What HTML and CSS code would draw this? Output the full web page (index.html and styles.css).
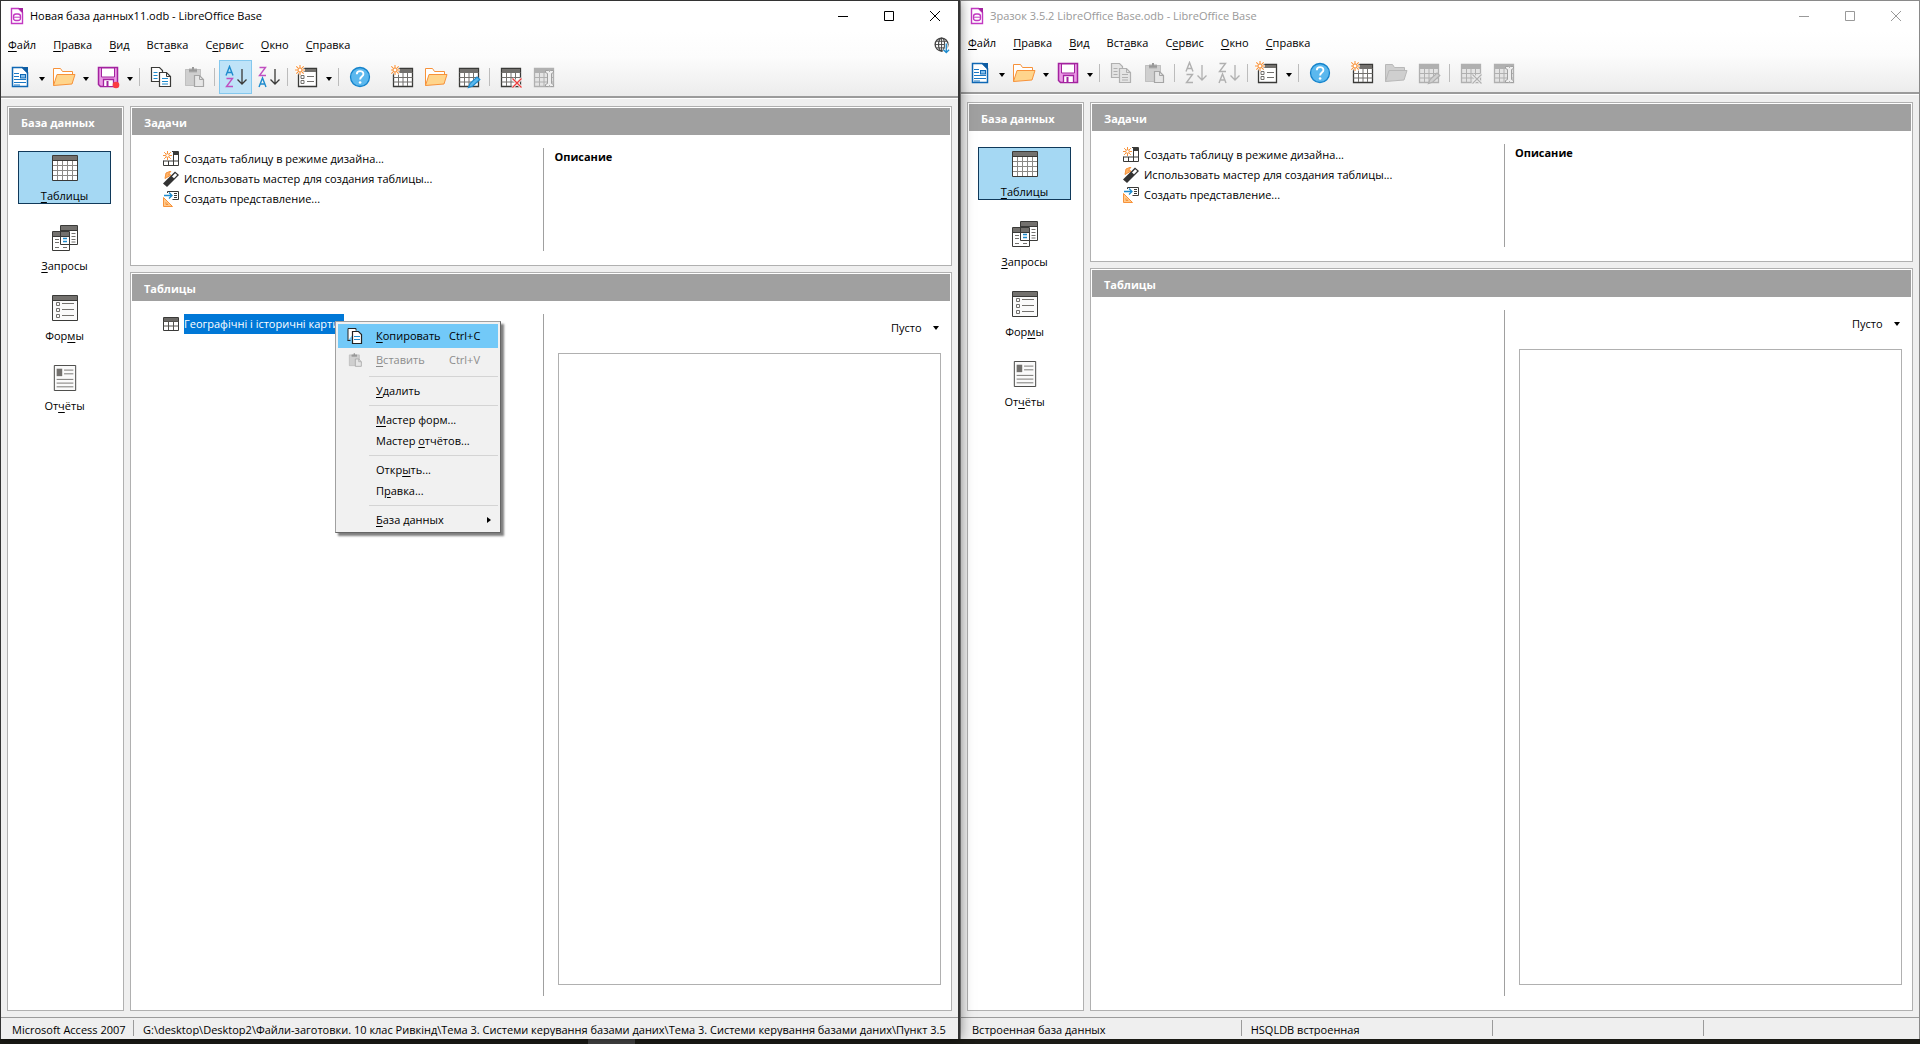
FILE: index.html
```html
<!DOCTYPE html>
<html lang="ru">
<head>
  <meta charset="UTF-8" />
  <title>LibreOffice Base</title>
  <meta name="viewport" content="width=device-width, initial-scale=1.0"/>
  <link rel="stylesheet" href="styles.css">
</head>
<body>
  <!-- Набор иконок -->
  <svg class="icon-set" xmlns="http://www.w3.org/2000/svg" aria-hidden="true">
    <symbol id="i-app" viewBox="0 0 14 18">
      <path d="M1.5 1.5h7l4 4v11h-11z" fill="#fff" stroke="#c238c2" stroke-width="1.4"/>
      <path d="M8 1h5v5z" fill="#a3229f"/>
      <rect x="3.5" y="7" width="7" height="6.500" rx="2.500" fill="none" stroke="#c238c2" stroke-width="1.300"/>
      <path d="M4 10.200h6" stroke="#c238c2"/>
    </symbol>
    <symbol id="i-new" viewBox="0 0 24 24">
      <path d="M4.500 2.500h10l5 5v14h-15z" fill="#fff" stroke="#0f68b5" stroke-width="1.500"/>
      <path d="M13 2h7v7z" fill="#0f5da3"/>
      <path d="M6 8.500h5M6 11.500h5M6 14.500h12M6 17.500h12M6 20h6" stroke="#1a78c4"/>
      <rect x="12.500" y="9.500" width="5" height="3.500" fill="#83beec" stroke="#0f68b5"/>
    </symbol>
    <symbol id="i-open" viewBox="0 0 24 24">
      <path d="M1.500 20.500v-17h7l2 3h10v3" fill="var(--folder-back)" stroke="var(--folder)"/>
      <path d="M5 9.500h18l-3 9.500-18.500 1.500z" fill="var(--folder-fill)" stroke="var(--folder)"/>
    </symbol>
    <symbol id="i-save" viewBox="0 0 24 24">
      <path d="M2.500 2.500h19v19h-17l-2-2z" fill="#eb9ae6" stroke="#a3229f" stroke-width="1.500"/>
      <path d="M5.500 3h13v9h-13z" fill="#fff" stroke="#a3229f"/>
      <path d="M7.500 21v-6.500h10v6.500" fill="#fff" stroke="#a3229f" stroke-width="1.300"/>
      <path d="M11.500 16v5" stroke="#a3229f" stroke-width="2"/>
    </symbol>
    <symbol id="i-dot" viewBox="0 0 24 24"><circle cx="20" cy="20" r="3.300" fill="#fb3a42"/></symbol>
    <symbol id="i-copy" viewBox="0 0 24 24">
      <path d="M2.500 2.500h8l3 3v11h-11z" fill="var(--paper)" stroke="var(--ink)" stroke-width="1.200"/>
      <path d="M4.500 7.500h4M4.500 10.500h4M4.500 13.500h4" stroke="var(--blue)"/>
      <path d="M10.500 7.500h7l4 4v10h-11z" fill="var(--paper)" stroke="var(--ink)" stroke-width="1.200"/>
      <path d="M17.500 7.500v4h4" fill="none" stroke="var(--ink)"/>
      <path d="M13 13.500h6M13 16.500h6M13 19h6" stroke="var(--blue)"/>
    </symbol>
    <symbol id="i-copy-sm" viewBox="0 0 16 16">
      <path d="M1 12.500v-12h8v2" fill="#fff" stroke="#222"/>
      <path d="M.5 12.500h3" stroke="#222"/>
      <path d="M5.500 3.500h6l3 3v9h-9z" fill="#fff" stroke="#222" stroke-width="1.200"/>
      <path d="M7 8.500h6M7 11.500h6" stroke="#1e8bcd" stroke-width="1.200"/>
    </symbol>
    <symbol id="i-paste" viewBox="0 0 24 24">
      <path d="M3 4h16v17h-16z" fill="#cfcfcf"/>
      <path d="M3.500 4.500h15v16h-15z" fill="none" stroke="#c0c0c0"/>
      <path d="M7 3.500h8v4h-8z" fill="#b0b0b0"/>
      <path d="M7 5.500h8M11 2v3" stroke="#999" stroke-width="2"/>
      <path d="M12.500 10.500h5l4 4v7h-9z" fill="#e6e6e6" stroke="#a5a5a5" stroke-width="1.200"/>
      <path d="M17.500 10.500v4h4" fill="none" stroke="#a5a5a5"/>
    </symbol>
    <symbol id="i-sort-asc" viewBox="0 0 24 24">
      <path d="M2 10.500l3.500-9 3.500 9M3 7.500h5" fill="none" stroke="var(--blue)" stroke-width="1.400"/>
      <path d="M2.500 13.500h6l-6 8h6.500" fill="none" stroke="var(--magenta)" stroke-width="1.400"/>
      <path d="M18 4v15M13.500 14.500l4.500 4.500 4.500-4.500" fill="none" stroke="var(--ink)" stroke-width="1.300"/>
    </symbol>
    <symbol id="i-sort-desc" viewBox="0 0 24 24">
      <path d="M2.500 2.500h6l-6 8h6.500" fill="none" stroke="var(--magenta)" stroke-width="1.400"/>
      <path d="M2 22l3.500-9 3.500 9M3 19h5" fill="none" stroke="var(--blue)" stroke-width="1.400"/>
      <path d="M18 4v15M13.500 14.500l4.500 4.500 4.500-4.500" fill="none" stroke="var(--ink)" stroke-width="1.300"/>
    </symbol>
    <symbol id="i-spark" viewBox="0 0 10 10">
      <path d="M5 0v10M0 5h10M1 1l8 8M9 1l-8 8" stroke="#fff" stroke-width="2.500"/>
      <path d="M5 0v10M0 5h10M1.300 1.300l7.400 7.400M8.700 1.300l-7.400 7.400" stroke="#f7923a" stroke-width="1.100"/>
      <circle cx="5" cy="5" r="2" fill="#fff" stroke="#f7923a"/>
    </symbol>
    <symbol id="i-form" viewBox="0 0 24 24">
      <path d="M3.500 3.500h18v18h-18z" fill="#fff" stroke="#3a3a38" stroke-width="1.300"/>
      <path d="M4 4h17v3h-17z" fill="#73716e"/>
      <path d="M6 10.500h3v3h-3zM6 15.500h3v3h-3zM12 11.500h7M12 16.500h7" fill="none" stroke="#73716e"/>
      <use href="#i-spark" x="0" y="0" width="10" height="10"/>
    </symbol>
    <symbol id="i-help" viewBox="0 0 24 24">
      <circle cx="12" cy="12" r="9.500" fill="#5bb8ee" stroke="#1583cb" stroke-width="1.300"/>
      <path d="M8.800 9.200c0-4.200 6.600-4 6.600-.3 0 2.600-3.300 2.700-3.300 5.600" fill="none" stroke="#fff" stroke-width="1.900"/>
      <circle cx="12.100" cy="17.500" r="1.300" fill="#fff"/>
    </symbol>
    <symbol id="i-grid" viewBox="0 0 24 24">
      <path d="M2.500 3.500h19v18h-19z" fill="var(--paper)" stroke="var(--ink)" stroke-width="1.300"/>
      <path d="M3 4h18v3h-18z" fill="var(--bar)"/>
      <path d="M2.500 7.500h19M2.500 12.500h19M2.500 17h19M7.500 7v14M12 7v14M16.500 7v14" stroke="var(--bar)"/>
    </symbol>
    <symbol id="i-table-new" viewBox="0 0 24 24">
      <use href="#i-grid" width="24" height="24"/>
      <use href="#i-spark" x="-1" y="0" width="10" height="10"/>
    </symbol>
    <symbol id="i-table-edit" viewBox="0 0 24 24">
      <use href="#i-grid" width="24" height="24"/>
      <path d="M11.500 22.500l1.500-4 7-6.500 2.800 2.500-7 6.500z" fill="var(--pencil)" stroke="var(--blue)" stroke-width="1.200"/>
    </symbol>
    <symbol id="i-table-del" viewBox="0 0 24 24">
      <use href="#i-grid" width="24" height="24"/>
      <path d="M13.500 13.500l9 9M22.500 13.500l-9 9" stroke="#f4f4f4" stroke-width="3"/>
      <path d="M13.500 13.500l9 9M22.500 13.500l-9 9" stroke="var(--red)" stroke-width="1.300"/>
    </symbol>
    <symbol id="i-table-rename" viewBox="0 0 24 24">
      <use href="#i-grid" width="24" height="24"/>
      <path d="M13.500 5.500h3l1 1 1-1h3v2l-2 1v10l2 1v2h-3l-1-1-1 1h-3v-2l2-1v-10l-2-1z" fill="#eee" stroke="#a0a0a0"/>
    </symbol>
    <symbol id="i-globe" viewBox="0 0 18 18">
      <circle cx="8" cy="8" r="6.800" fill="#fff" stroke="#444" stroke-width="1.400"/>
      <ellipse cx="8" cy="8" rx="3.200" ry="6.800" fill="none" stroke="#444" stroke-width="1.200"/>
      <path d="M1 8h14M2.500 4.500h11M2.500 11.500h11M8 1v14" stroke="#444"/>
      <path d="M13 7v9M10 13.500l3 3 3-3" fill="none" stroke="#fff" stroke-width="3"/>
      <path d="M13 7v9M10 13.500l3 3 3-3" fill="none" stroke="#1e8bcd" stroke-width="1.400"/>
    </symbol>
    <!-- Боковая панель -->
    <symbol id="n-tables" viewBox="0 0 26 26">
      <path d="M.5.5h25v25h-25z" fill="#fff" stroke="#3a3a38"/>
      <path d="M1 1h24v4.500h-24z" fill="#73716e"/>
      <path d="M0 5.500h26" stroke="#3a3a38"/>
      <path d="M1 10.500h24M1 15.500h24M1 20.500h24M5.500 6v19M10.500 6v19M15.500 6v19M20.500 6v19" stroke="#8b8986"/>
    </symbol>
    <symbol id="n-queries" viewBox="0 0 26 26">
      <path d="M8.500.5h17v19h-17z" fill="#fff" stroke="#3a3a38"/>
      <path d="M9 1h16v4.500h-16z" fill="#73716e"/>
      <path d="M8.500 5.500h17" stroke="#3a3a38"/>
      <path d="M19.500 8.500h4M19.500 11.500h4M19.500 14.500h4M19.500 17h4" stroke="#73716e"/>
      <path d="M.5 6.500h17v19h-17z" fill="#fff" stroke="#3a3a38"/>
      <path d="M1 7h16v4h-16z" fill="#73716e"/>
      <path d="M.5 11.500h17M8.500 6v13.500h9" fill="none" stroke="#3a3a38"/>
      <path d="M3 14.500h4M3 17.500h4M3 22.500h4M11 22.500h4" stroke="#73716e"/>
      <path d="M11 13.500h4M11 16.500h4" stroke="#1e8bcd" stroke-width="1.300"/>
    </symbol>
    <symbol id="n-forms" viewBox="0 0 26 26">
      <path d="M.5.5h25v25h-25z" fill="#fafafa" stroke="#3a3a38"/>
      <path d="M1 1h24v4.500h-24z" fill="#73716e"/>
      <path d="M0 5.500h26" stroke="#3a3a38"/>
      <path d="M4.500 7.500h3v3h-3zM4.500 13.500h3v3h-3zM4.500 19.500h3v3h-3zM10 8.500h12M10 14.500h12M10 20.500h12" fill="none" stroke="#73716e"/>
    </symbol>
    <symbol id="n-reports" viewBox="0 0 26 28">
      <path d="M1.500.5h23v27h-23z" fill="#fafafa" stroke="#3a3a38"/>
      <path d="M4 4h6v8h-6z" fill="#73716e"/>
      <path d="M12 5.500h10M12 9.500h10M4 15.500h18M4 19.500h18M4 23.500h18" stroke="#73716e"/>
    </symbol>
    <!-- Задачи -->
    <symbol id="t-design" viewBox="0 0 16 16">
      <path d="M9 .5h6.500v14h-15v-5" fill="#fff" stroke="#3a3a38"/>
      <path d="M10 1h5v3h-5z" fill="#3a3a38"/>
      <path d="M.5 10h15M5.500 10v5M10.500 4v11" stroke="#3a3a38"/>
      <use href="#i-spark" x="0" y="0" width="9" height="9"/>
    </symbol>
    <symbol id="t-wizard" viewBox="0 0 16 16">
      <path d="M2 7.500l1-5.500 5-2-2.500 3.500 2.500.5z" fill="#ffb468" stroke="#f7923a"/>
      <path d="M0 12.500l12-12 4 3.500-12 12z" fill="#333"/>
      <path d="M9 5.500l3.200-3.200 2 1.800-3.200 3.200z" fill="#fff"/>
    </symbol>
    <symbol id="t-view" viewBox="0 0 16 16">
      <path d="M4.500 2v-1.500h11v8h-6" fill="#fff" stroke="#3a3a38"/>
      <path d="M11 2.500h3M11 4.500h3M11 6.500h3" stroke="#3a3a38"/>
      <path d="M1 4.500h8M6 1.500l3 3-3 3" fill="none" stroke="#1e8bcd" stroke-width="1.300"/>
      <path d="M.5 6.500l9 9h-9zM3 11.500v2h2z" fill="#ffca8c" stroke="#f7923a"/>
    </symbol>
    <symbol id="t-table" viewBox="0 0 16 14">
      <path d="M.5.5h15v13h-15z" fill="#fff" stroke="#3a3a38"/>
      <path d="M1 1h14v3h-14z" fill="#6b6966"/>
      <path d="M.5 4.500h15M.5 9h15M5.500 4v9M10.500 4v9" stroke="#55534f"/>
    </symbol>
    <!-- Кнопки окна -->
    <symbol id="w-min" viewBox="0 0 10 10"><path d="M0 5.500h10" stroke="currentColor"/></symbol>
    <symbol id="w-max" viewBox="0 0 10 10"><path d="M.5.5h9v9h-9z" fill="none" stroke="currentColor"/></symbol>
    <symbol id="w-close" viewBox="0 0 10 10"><path d="M0 0l10 10M10 0l-10 10" stroke="currentColor"/></symbol>
  </svg>

  <div class="desktop">
    <!-- Левое окно (активное) -->
    <section class="window active">
      <header class="titlebar">
        <svg class="app-icon"><use href="#i-app"/></svg>
        <span class="title">Новая база данных11.odb - LibreOffice Base</span>
        <button class="win-btn" aria-label="Свернуть"><svg><use href="#w-min"/></svg></button>
        <button class="win-btn" aria-label="Развернуть"><svg><use href="#w-max"/></svg></button>
        <button class="win-btn" aria-label="Закрыть"><svg><use href="#w-close"/></svg></button>
      </header>
      <div class="bars">
        <nav class="menubar">
          <button><u>Ф</u>айл</button>
          <button><u>П</u>равка</button>
          <button><u>В</u>ид</button>
          <button>Вст<u>а</u>вка</button>
          <button>С<u>е</u>рвис</button>
          <button><u>О</u>кно</button>
          <button><u>С</u>правка</button>
          <button class="update" aria-label="Обновление"><svg><use href="#i-globe"/></svg></button>
        </nav>
        <div class="toolbar">
          <button class="tool" aria-label="Создать"><svg><use href="#i-new"/></svg></button>
          <button class="drop" aria-label="Создать: меню"></button>
          <button class="tool" aria-label="Открыть"><svg><use href="#i-open"/></svg></button>
          <button class="drop" aria-label="Открыть: меню"></button>
          <button class="tool" aria-label="Сохранить"><svg><use href="#i-save"/><use href="#i-dot"/></svg></button>
          <button class="drop" aria-label="Сохранить: меню"></button>
          <span class="sep"></span>
          <button class="tool" aria-label="Копировать"><svg><use href="#i-copy"/></svg></button>
          <button class="tool" aria-label="Вставить" disabled><svg><use href="#i-paste"/></svg></button>
          <span class="sep"></span>
          <button class="tool pressed" aria-label="По возрастанию"><svg><use href="#i-sort-asc"/></svg></button>
          <button class="tool" aria-label="По убыванию"><svg><use href="#i-sort-desc"/></svg></button>
          <span class="sep tight"></span>
          <button class="tool" aria-label="Форма"><svg><use href="#i-form"/></svg></button>
          <button class="drop" aria-label="Форма: меню"></button>
          <span class="sep"></span>
          <button class="tool" aria-label="Справка"><svg><use href="#i-help"/></svg></button>
          <span class="toolbar-gap"></span>
          <button class="tool" aria-label="Новая таблица"><svg><use href="#i-table-new"/></svg></button>
          <button class="tool" aria-label="Открыть таблицу"><svg><use href="#i-open"/></svg></button>
          <button class="tool" aria-label="Изменить таблицу"><svg><use href="#i-table-edit"/></svg></button>
          <span class="sep"></span>
          <button class="tool" aria-label="Удалить таблицу"><svg><use href="#i-table-del"/></svg></button>
          <button class="tool" aria-label="Переименовать" disabled><svg><use href="#i-table-rename"/></svg></button>
        </div>
      </div>

      <div class="workarea">
        <aside class="panel sidebar">
          <h2>База данных</h2>
          <button class="nav-item selected"><svg><use href="#n-tables"/></svg><span><u>Т</u>аблицы</span></button>
          <button class="nav-item"><svg><use href="#n-queries"/></svg><span><u>З</u>апросы</span></button>
          <button class="nav-item"><svg><use href="#n-forms"/></svg><span>Фор<u>м</u>ы</span></button>
          <button class="nav-item"><svg><use href="#n-reports"/></svg><span>От<u>ч</u>ёты</span></button>
        </aside>
        <main class="content">
          <section class="panel tasks">
            <h2>Задачи</h2>
            <div class="split">
              <ul class="list">
                <li><a href="#"><svg><use href="#t-design"/></svg><span>Создать таблицу в режиме дизайна...</span></a></li>
                <li><a href="#"><svg><use href="#t-wizard"/></svg><span>Использовать мастер для создания таблицы...</span></a></li>
                <li><a href="#"><svg><use href="#t-view"/></svg><span>Создать представление...</span></a></li>
              </ul>
              <div class="description"><h3>Описание</h3></div>
            </div>
          </section>
          <section class="panel objects">
            <h2>Таблицы</h2>
            <div class="split">
              <ul class="list">
                <li class="current">
                  <a href="#"><svg><use href="#t-table"/></svg><span>Географічні і історичні карти</span></a>
                  <!-- Контекстное меню таблицы -->
                  <div class="context-menu">
                    <button class="with-icon hover"><svg><use href="#i-copy-sm"/></svg><span><u>К</u>опировать</span><kbd>Ctrl+C</kbd></button>
                    <button class="with-icon" disabled><svg><use href="#i-paste"/></svg><span><u>В</u>ставить</span><kbd>Ctrl+V</kbd></button>
                    <hr>
                    <button><span><u>У</u>далить</span></button>
                    <hr>
                    <button><span><u>М</u>астер форм...</span></button>
                    <button><span>Мастер <u>о</u>тчётов...</span></button>
                    <hr>
                    <button><span>Откр<u>ы</u>ть...</span></button>
                    <button><span>П<u>р</u>авка...</span></button>
                    <hr>
                    <button class="submenu"><span><u>Б</u>аза данных</span></button>
                  </div>
                </li>
              </ul>
              <div class="preview">
                <label class="preview-mode"><select aria-label="Просмотр"><option>Пусто</option></select></label>
                <div class="preview-box"></div>
              </div>
            </div>
          </section>
        </main>
      </div>

      <footer class="statusbar">
        <span>Microsoft Access 2007</span>
        <span>G:\desktop\Desktop2\Файли-заготовки. 10 клас Ривкінд\Тема 3. Системи керування базами даних\Тема 3. Системи керування базами даних\Пункт 3.5</span>
      </footer>
    </section>

    <!-- Правое окно (неактивное) -->
    <section class="window inactive">
      <header class="titlebar">
        <svg class="app-icon"><use href="#i-app"/></svg>
        <span class="title">Зразок 3.5.2 LibreOffice Base.odb - LibreOffice Base</span>
        <button class="win-btn" aria-label="Свернуть"><svg><use href="#w-min"/></svg></button>
        <button class="win-btn" aria-label="Развернуть"><svg><use href="#w-max"/></svg></button>
        <button class="win-btn" aria-label="Закрыть"><svg><use href="#w-close"/></svg></button>
      </header>
      <div class="bars">
        <nav class="menubar">
          <button><u>Ф</u>айл</button>
          <button><u>П</u>равка</button>
          <button><u>В</u>ид</button>
          <button>Вст<u>а</u>вка</button>
          <button>С<u>е</u>рвис</button>
          <button><u>О</u>кно</button>
          <button><u>С</u>правка</button>
        </nav>
        <div class="toolbar">
          <button class="tool" aria-label="Создать"><svg><use href="#i-new"/></svg></button>
          <button class="drop" aria-label="Создать: меню"></button>
          <button class="tool" aria-label="Открыть"><svg><use href="#i-open"/></svg></button>
          <button class="drop" aria-label="Открыть: меню"></button>
          <button class="tool" aria-label="Сохранить"><svg><use href="#i-save"/></svg></button>
          <button class="drop" aria-label="Сохранить: меню"></button>
          <span class="sep"></span>
          <button class="tool" aria-label="Копировать" disabled><svg><use href="#i-copy"/></svg></button>
          <button class="tool" aria-label="Вставить" disabled><svg><use href="#i-paste"/></svg></button>
          <span class="sep"></span>
          <button class="tool" aria-label="По возрастанию" disabled><svg><use href="#i-sort-asc"/></svg></button>
          <button class="tool" aria-label="По убыванию" disabled><svg><use href="#i-sort-desc"/></svg></button>
          <span class="sep tight"></span>
          <button class="tool" aria-label="Форма"><svg><use href="#i-form"/></svg></button>
          <button class="drop" aria-label="Форма: меню"></button>
          <span class="sep"></span>
          <button class="tool" aria-label="Справка"><svg><use href="#i-help"/></svg></button>
          <span class="toolbar-gap"></span>
          <button class="tool" aria-label="Новая таблица"><svg><use href="#i-table-new"/></svg></button>
          <button class="tool" aria-label="Открыть таблицу" disabled><svg><use href="#i-open"/></svg></button>
          <button class="tool" aria-label="Изменить таблицу" disabled><svg><use href="#i-table-edit"/></svg></button>
          <span class="sep"></span>
          <button class="tool" aria-label="Удалить таблицу" disabled><svg><use href="#i-table-del"/></svg></button>
          <button class="tool" aria-label="Переименовать" disabled><svg><use href="#i-table-rename"/></svg></button>
        </div>
      </div>

      <div class="workarea">
        <aside class="panel sidebar">
          <h2>База данных</h2>
          <button class="nav-item selected"><svg><use href="#n-tables"/></svg><span><u>Т</u>аблицы</span></button>
          <button class="nav-item"><svg><use href="#n-queries"/></svg><span><u>З</u>апросы</span></button>
          <button class="nav-item"><svg><use href="#n-forms"/></svg><span>Фор<u>м</u>ы</span></button>
          <button class="nav-item"><svg><use href="#n-reports"/></svg><span>От<u>ч</u>ёты</span></button>
        </aside>
        <main class="content">
          <section class="panel tasks">
            <h2>Задачи</h2>
            <div class="split">
              <ul class="list">
                <li><a href="#"><svg><use href="#t-design"/></svg><span>Создать таблицу в режиме дизайна...</span></a></li>
                <li><a href="#"><svg><use href="#t-wizard"/></svg><span>Использовать мастер для создания таблицы...</span></a></li>
                <li><a href="#"><svg><use href="#t-view"/></svg><span>Создать представление...</span></a></li>
              </ul>
              <div class="description"><h3>Описание</h3></div>
            </div>
          </section>
          <section class="panel objects">
            <h2>Таблицы</h2>
            <div class="split">
              <ul class="list"></ul>
              <div class="preview">
                <label class="preview-mode"><select aria-label="Просмотр"><option>Пусто</option></select></label>
                <div class="preview-box"></div>
              </div>
            </div>
          </section>
        </main>
      </div>

      <footer class="statusbar">
        <span>Встроенная база данных</span>
        <span>HSQLDB встроенная</span>
        <span></span>
        <span></span>
      </footer>
    </section>
  </div>
  <div class="taskbar"><span></span></div>
</body>
</html>
```

FILE: styles.css
```css
/* ================================
   Общие стили
   ================================ */
* {
  box-sizing: border-box;
}
body {
  --ink: #3a3a38;
  --paper: #fff;
  --bar: #73716e;
  --blue: #1e8bcd;
  --magenta: #c04fc0;
  --red: #ed3d3b;
  --pencil: #5bb8ee;
  --folder: #f7923a;
  --folder-fill: #ffd58c;
  --folder-back: #fff;
  margin: 0;
  height: 100vh;
  display: flex;
  flex-direction: column;
  background: #1b1b16;
  color: #000;
  font-family: "Open Sans", "Noto Sans", sans-serif;
  font-size: 11px;
  line-height: 16px;
  overflow: hidden;
}
button,
select {
  font: inherit;
  color: inherit;
  background: none;
  border: none;
  padding: 0;
  margin: 0;
}
a {
  color: inherit;
  text-decoration: none;
}
u {
  text-underline-offset: 2px;
}
svg {
  display: block;
  flex: none;
  overflow: visible;
}
.icon-set {
  position: absolute;
  width: 0;
  height: 0;
}

/* ================================
   Окна
   ================================ */
.desktop {
  flex: 1;
  min-height: 0;
  display: flex;
}
.window {
  flex: 0 0 50%;
  min-width: 0;
  display: flex;
  flex-direction: column;
  background: #efefef;
  border: 1px solid #8a8a8a;
  border-bottom: none;
}
.window.active {
  position: relative;
  z-index: 1;
  border-color: #333;
  border-right-width: 2px;
  box-shadow: 0 0 12px rgba(0, 0, 0, 0.5);
}
.titlebar {
  display: flex;
  align-items: center;
  height: 30px;
  padding-left: 9px;
  background: #fff;
}
.app-icon {
  width: 14px;
  height: 18px;
  margin-right: 6px;
}
.title {
  flex: 1;
}
.inactive .title,
.inactive .win-btn {
  color: #999;
}
.win-btn {
  width: 46px;
  height: 30px;
  display: flex;
  align-items: center;
  justify-content: center;
}
.win-btn svg {
  width: 10px;
  height: 10px;
}

/* ================================
   Меню и панель инструментов
   ================================ */
.bars {
  background: linear-gradient(#fff, #fcfcfc 40%, #ececec);
  border-bottom: 2px solid #9b9b9b;
}
.menubar {
  display: flex;
  align-items: center;
  gap: 17px;
  min-height: 24px;
  padding: 0 7px;
}
.update {
  margin-left: auto;
  height: 28px;
}
.update svg {
  width: 17px;
  height: 17px;
}
.toolbar {
  display: flex;
  align-items: center;
  padding: 1px 2px 2px;
}
.tool {
  width: 33px;
  height: 34px;
  display: flex;
  align-items: center;
  justify-content: center;
  border: 1px solid transparent;
}
.tool svg {
  width: 24px;
  height: 24px;
}
.tool.pressed {
  background: #bfe3f8;
  border-color: #84c8ee;
}
.tool:disabled {
  --ink: #b0b0b0;
  --paper: #e4e4e4;
  --bar: #b0b0b0;
  --blue: #b0b0b0;
  --magenta: #b0b0b0;
  --red: #b0b0b0;
  --pencil: #d0d0d0;
  --folder: #b8b8b8;
  --folder-fill: #cfcfcf;
  --folder-back: #cfcfcf;
}
.drop {
  width: 11px;
  height: 34px;
  padding-top: 3px;
  display: flex;
  align-items: center;
  justify-content: center;
}
.drop::after,
.preview-mode::after {
  content: "";
  border: 3px solid transparent;
  border-top: 4px solid #000;
  border-bottom: none;
}
.sep {
  width: 1px;
  height: 18px;
  margin: 0 4px;
  background: #bcbcbc;
}
.sep.tight {
  margin: 0 2px;
}
.toolbar-gap {
  width: 10px;
}

/* ================================
   Рабочая область
   ================================ */
.workarea {
  flex: 1;
  min-height: 0;
  display: flex;
  gap: 6px;
  padding: 7px 6px 6px;
  border-top: 1px solid #fff;
}
.panel {
  background: #fff;
  border: 1px solid #b0b0b0;
  padding: 1px;
}
.panel h2 {
  margin: 0;
  height: 27px;
  padding: 0 12px;
  background: #a0a0a0;
  color: #fff;
  font-size: 11px;
  font-weight: bold;
  line-height: 30px;
}
.sidebar {
  width: 117px;
  display: flex;
  flex-direction: column;
}
.nav-item {
  width: 93px;
  height: 53px;
  margin: 0 9px 17px;
  display: flex;
  flex-direction: column;
  align-items: center;
  justify-content: space-between;
  padding-top: 3px;
  line-height: 14px;
  border: 1px solid transparent;
}
.sidebar h2 + .nav-item {
  margin-top: 16px;
}
.nav-item.selected {
  background: #a5d8f3;
  border-color: #10395a;
}
.nav-item svg {
  width: 26px;
  height: 26px;
}
.content {
  flex: 1;
  min-width: 0;
  display: flex;
  flex-direction: column;
  gap: 6px;
}
.tasks {
  height: 160px;
}
.objects {
  flex: 1;
  min-height: 0;
}
.panel.tasks,
.panel.objects {
  display: flex;
  flex-direction: column;
}
.split {
  flex: 1;
  min-height: 0;
  display: grid;
  grid-template-columns: 50.3% 1fr;
  padding: 13px 0;
}
.list {
  list-style: none;
  margin: 0;
  padding: 0 0 0 31px;
}
.tasks .list {
  padding-top: 1px;
}
.list a {
  display: flex;
  align-items: center;
  gap: 5px;
  height: 20px;
}
.list svg {
  width: 16px;
  height: 16px;
}
.description,
.preview {
  border-left: 1px solid #a0a0a0;
  padding-left: 10px;
}
.description h3 {
  margin: 0;
  font-size: 11px;
  line-height: 18px;
}

/* Выделенная таблица */
.current {
  position: relative;
}
.current a span {
  padding-right: 5px;
  background: #0078d7;
  color: #fff;
  line-height: 20px;
}

/* ================================
   Просмотр
   ================================ */
.preview {
  display: flex;
  flex-direction: column;
  padding: 4px 9px 11px 14px;
}
.preview-mode {
  display: flex;
  align-items: center;
  align-self: flex-end;
  gap: 11px;
  height: 20px;
  padding-right: 2px;
}
.preview-mode select {
  appearance: none;
}
.preview-box {
  flex: 1;
  margin-top: 15px;
  border: 1px solid #b0b0b0;
}

/* ================================
   Контекстное меню
   ================================ */
.context-menu {
  position: absolute;
  left: 172px;
  top: 7px;
  width: 166px;
  padding: 2px;
  background: #f1f1f1;
  border: 1px solid #a0a0a0;
  border-right-color: #666;
  border-bottom-color: #666;
  box-shadow: 3px 3px 2px rgba(0, 0, 0, 0.5);
}
.context-menu button {
  display: flex;
  align-items: center;
  width: 100%;
  height: 21px;
  padding-left: 38px;
  text-align: left;
}
.context-menu .with-icon {
  height: 24px;
  padding-left: 9px;
}
.context-menu .with-icon svg {
  margin-right: 13px;
}
.context-menu .hover {
  background: #72c9f8;
}
.context-menu button:disabled {
  color: #8c8c8c;
}
.context-menu span {
  flex: 1;
  white-space: nowrap;
}
.context-menu kbd {
  font: inherit;
  width: 49px;
}
.context-menu hr {
  margin: 4px 0 3px 31px;
  border: none;
  border-top: 1px solid #d4d4d4;
}
.context-menu .submenu::after {
  content: "";
  margin-right: 7px;
  border: 3px solid transparent;
  border-left: 4px solid #000;
  border-right: none;
}

/* ================================
   Строка состояния
   ================================ */
.statusbar {
  display: grid;
  grid-template-columns: 132px 1fr;
  height: 22px;
  padding: 2px 0 3px;
  border-top: 1px solid #9b9b9b;
}
.inactive .statusbar {
  grid-template-columns: 280fr 252fr 211fr 216fr;
}
.statusbar span {
  padding-left: 9px;
  line-height: 20px;
  white-space: nowrap;
  overflow: hidden;
}
.statusbar span:first-child {
  padding-left: 11px;
}
.statusbar span + span {
  border-left: 1px solid #9b9b9b;
}
.taskbar {
  height: 5px;
  padding-left: 588px;
}
.taskbar span {
  display: block;
  width: 47px;
  height: 5px;
  background: #444;
}
```
